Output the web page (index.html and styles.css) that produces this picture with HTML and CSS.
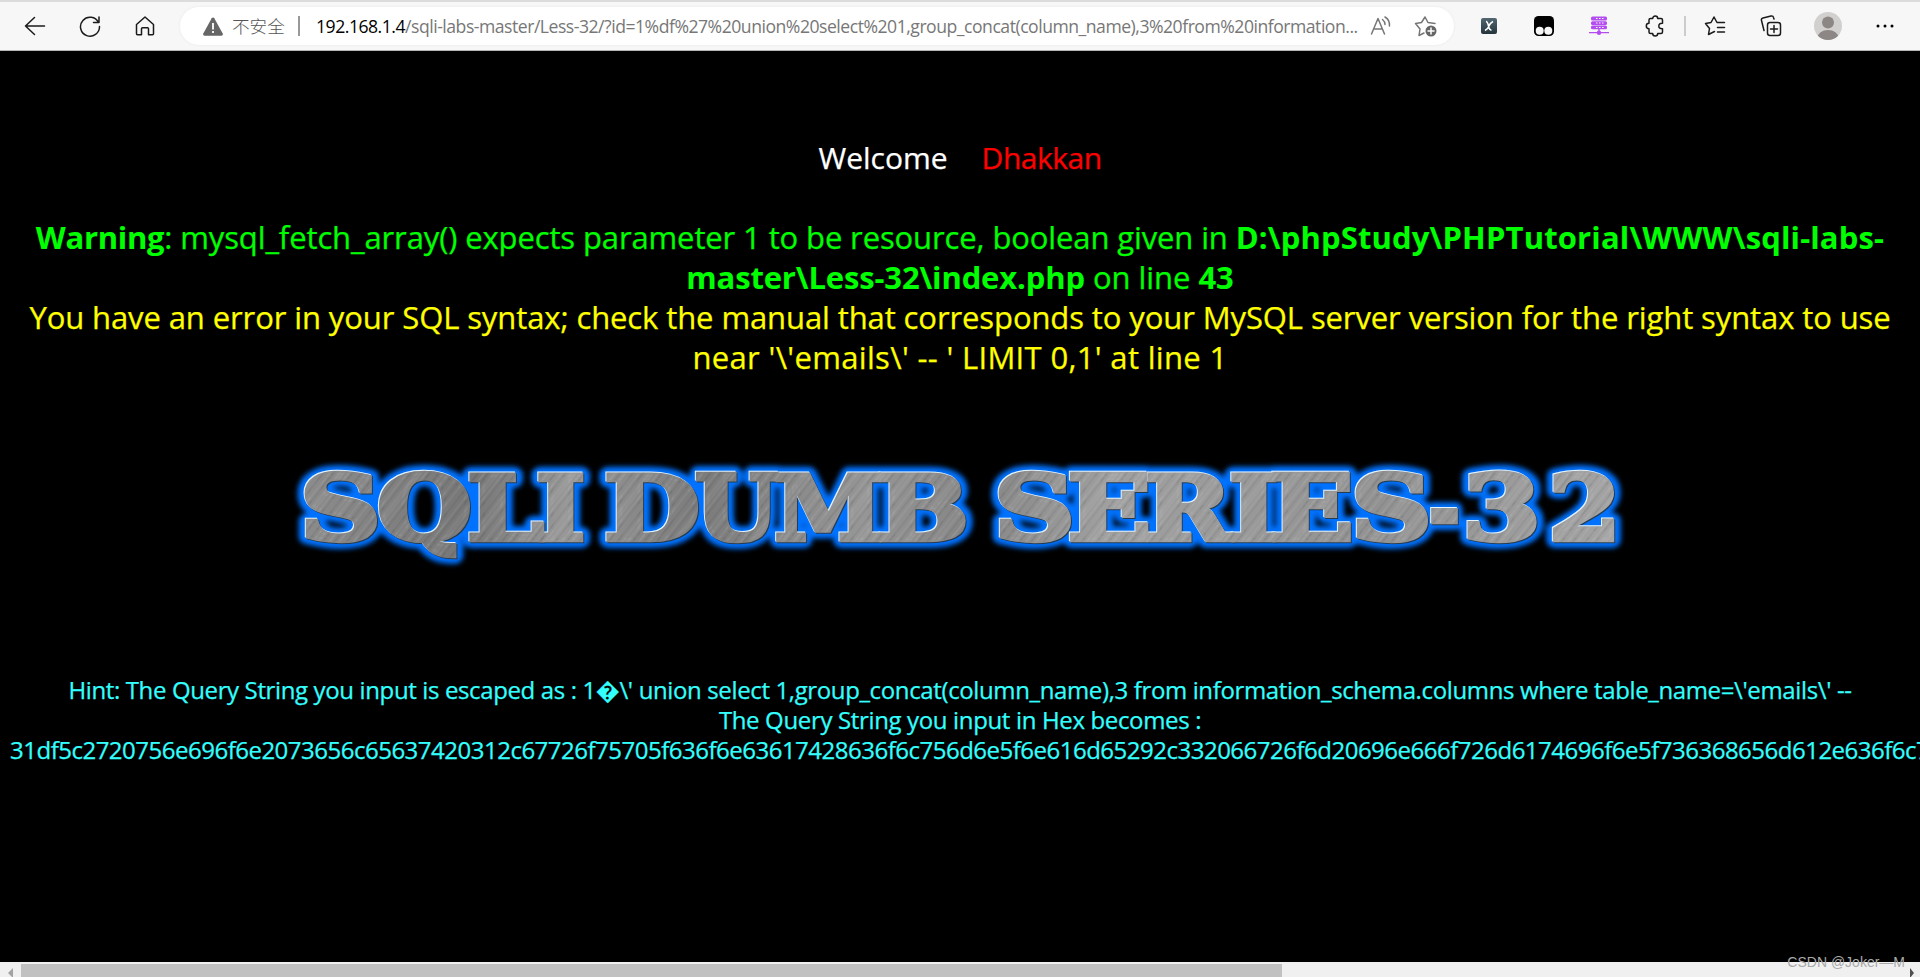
FILE: index.html
```html
<!DOCTYPE html>
<html lang="en">
<head>
<meta charset="utf-8">
<title>Less-32</title>
<link rel="stylesheet" href="styles.css">
</head>
<body>
<header class="toolbar">
  <svg class="icon back" width="24" height="24" viewBox="0 0 24 24"><path d="M21.500 12H2.500M11.500 3.500L2.500 12l9 8.500"/></svg>
  <svg class="icon reload" width="24" height="24" viewBox="0 0 24 24"><path d="M20.500 8.500A9.500 9.500 0 1 0 21.500 12.500M21 3v5.500h-5.500"/></svg>
  <svg class="icon home" width="24" height="24" viewBox="0 0 24 24"><path d="M3.500 10.500L12 3l8.500 7.500v9.300a1 1 0 0 1-1 1H15.500v-6a1 1 0 0 0-1-1h-5a1 1 0 0 0-1 1v6h-4a1 1 0 0 1-1-1z"/></svg>
  <div class="address">
    <svg class="warn" width="20" height="19" viewBox="0 0 20 19"><path d="M8.700 1.200a1.500 1.500 0 0 1 2.600 0l8.400 15.300a1.500 1.500 0 0 1-1.300 2.200H1.600A1.500 1.500 0 0 1 .3 16.500z" fill="#666"/><path d="M10 6v6.500M10 14v2" stroke="#fff" stroke-width="1.800"/></svg>
    <span class="insecure">不安全</span>
    <span class="divider"></span>
    <span class="url"><b>192.168.1.4</b>/sqli-labs-master/Less-32/?id=1%df%27%20union%20select%201,group_concat(column_name),3%20from%20information...</span>
    <svg class="icon gray read" width="22" height="22" viewBox="0 0 22 22"><path d="M1.500 19L8 3.500 14.500 19M3.700 14h8.600M12.500 4.500q2.500 2 2.500 5M15 2q5 3 4.500 9"/></svg>
    <svg class="icon gray fav" width="24" height="24" viewBox="0 0 24 24"><path d="M10 19l-5 2.500 1-6.500L1.500 9.500l6-1L11 3l3 5.500 7 1"/><circle cx="17" cy="17" r="5.500" fill="#666" stroke="none"/><path d="M14 17h6M17 14v6" stroke="#fff"/></svg>
  </div>
  <div class="tools">
    <svg width="16" height="16" viewBox="0 0 16 16"><defs><linearGradient id="ext" x2="0" y2="1"><stop stop-color="#536872"/><stop offset="1" stop-color="#24343d"/></linearGradient></defs><rect width="16" height="16" rx="2" fill="url(#ext)"/><path d="M5 3.500q1.500 0 2.500 4.500t3 4M12 3.500Q9 5 8 8t-4 4.500" fill="none" stroke="#fff" stroke-width="1.500"/></svg>
    <svg class="monkey" width="20" height="20" viewBox="0 0 20 20"><rect width="20" height="20" rx="4.500"/><circle cx="5.700" cy="14.800" r="4" fill="#f7f7f7"/><circle cx="14.300" cy="14.800" r="4" fill="#f7f7f7"/></svg>
    <svg class="proxy" width="20" height="20" viewBox="0 0 20 20" fill="#b44df0"><rect x="2" y="0.500" width="16" height="4" rx="1.500"/><rect x="2" y="5.300" width="16" height="3.600" rx="1.500"/><rect x="2" y="9.500" width="16" height="3.800" rx="1.500"/><path d="M9.300 13h1.400v3H20v1.300H0V16h9.300z"/><circle cx="10" cy="16.700" r="2.200"/><path d="M7 2.500h8M7 7h8M7 11.500h8" stroke="#fff" stroke-dasharray="1.500 1.500"/></svg>
    <svg class="icon puzzle" width="20" height="22" viewBox="0 0 20 22"><path d="M5.500 3.500h2.200a2.500 2.500 0 0 1 5 0H16q1.500 0 1.500 1.500v3.200q-3.700-.2-3.700 2.800t3.700 2.800V17q0 1.500-1.500 1.500h-3.300a2.500 2.500 0 0 1-5 0H5.500Q4 18.500 4 17v-3.300a2.700 2.700 0 0 1 0-5.400V5q0-1.500 1.500-1.500z"/></svg>
    <span class="sep"></span>
    <svg class="icon favorites" width="22" height="22" viewBox="0 0 22 22"><path d="M10.500 16.500L4.500 19.500l1-6L1.500 8.500l5.500-1L10 2l3 5.500h7.500M13.500 12.500H20.500M13.500 17H20.500"/></svg>
    <svg class="icon collections" width="22" height="22" viewBox="0 0 22 22"><rect x="7.500" y="7.500" width="13" height="13" rx="2.500"/><path d="M14 10.500v7M10.500 14h7M4 15.500L1.500 5.500Q1 3.500 3 3L11 1q2-.5 2.500 1.500l.5 1.500"/></svg>
    <svg class="avatar" width="28" height="28" viewBox="0 0 28 28"><defs><clipPath id="head"><circle cx="14" cy="14" r="14"/></clipPath></defs><g clip-path="url(#head)"><path d="M0 0h28v28H0z" fill="#d2d0ce"/><g fill="#8c8785"><circle cx="14" cy="10.500" r="6"/><ellipse cx="14" cy="26" rx="10.500" ry="8"/></g></g></svg>
    <svg class="more" width="18" height="4" viewBox="0 0 18 4"><circle cx="2" cy="2" r="1.500"/><circle cx="9" cy="2" r="1.500"/><circle cx="16" cy="2" r="1.500"/></svg>
  </div>
</header>
<main class="page">
  <h1 class="welcome"><span>Welcome</span><span class="name">Dhakkan</span></h1>
  <section class="message">
    <p class="line warning w1"><b>Warning</b>: mysql_fetch_array() expects parameter 1 to be resource, boolean given in <b class="path">D:\phpStudy\PHPTutorial\WWW\sqli-labs-</b></p>
    <p class="line warning w2"><b>master\Less-32\index.php</b> on line <b>43</b></p>
    <p class="line error e1">You have an error in your SQL syntax; check the manual that corresponds to your MySQL server version for the right syntax to use</p>
    <p class="line error e2">near '\'emails\' -- ' LIMIT 0,1' at line 1</p>
  </section>
  <svg class="banner" width="1360" height="130" viewBox="280 450 1360 130">
    <defs>
      <linearGradient id="metal" gradientUnits="userSpaceOnUse" x1="300" y1="470" x2="1620" y2="700">
        <stop stop-color="#8d8d8d"/><stop offset=".13" stop-color="#777"/><stop offset=".2" stop-color="#989898"/><stop offset=".3" stop-color="#7b7b7b"/><stop offset=".42" stop-color="#969696"/><stop offset=".5" stop-color="#858585"/><stop offset=".6" stop-color="#a0a0a0"/><stop offset=".8" stop-color="#929292"/><stop offset="1" stop-color="#a6a6a6"/>
      </linearGradient>
      <pattern id="brush" width="61" height="80" patternUnits="userSpaceOnUse" patternTransform="rotate(38)">
        <path d="M2 0v80M13 0v80M17 0v80M31 0v80M44 0v80M52 0v80" stroke="#fff" stroke-opacity=".1"/>
        <path d="M5 0v80M20 0v80M27 0v80M39 0v80M48 0v80M58 0v80" stroke="#000" stroke-opacity=".09"/>
        <path d="M10 0v80M35 0v80" stroke="#fff" stroke-opacity=".06" stroke-width="3"/>
      </pattern>
      <filter id="glow" x="-5%" y="-30%" width="110%" height="160%"><feGaussianBlur stdDeviation="2.500"/></filter>
      <g id="title" class="title">
        <text x="300" y="539.500" textLength="81" lengthAdjust="spacingAndGlyphs">S</text>
        <text x="377" y="539.500" textLength="95" lengthAdjust="spacingAndGlyphs">Q</text>
        <text x="467" y="539.500" textLength="77" lengthAdjust="spacingAndGlyphs">L</text>
        <text x="536" y="539.500" textLength="49.500" lengthAdjust="spacingAndGlyphs">I</text>
        <text x="604" y="539.500" textLength="96" lengthAdjust="spacingAndGlyphs">D</text>
        <text x="695" y="539.500" textLength="83.400" lengthAdjust="spacingAndGlyphs">U</text>
        <text x="774.500" y="539.500" textLength="109" lengthAdjust="spacingAndGlyphs">M</text>
        <text x="877" y="539.500" textLength="92" lengthAdjust="spacingAndGlyphs">B</text>
        <text x="994" y="539.500" textLength="81" lengthAdjust="spacingAndGlyphs">S</text>
        <text x="1067.600" y="539.500" textLength="83.700" lengthAdjust="spacingAndGlyphs">E</text>
        <text x="1145.300" y="539.500" textLength="86" lengthAdjust="spacingAndGlyphs">R</text>
        <text x="1229" y="539.500" textLength="49.500" lengthAdjust="spacingAndGlyphs">I</text>
        <text x="1270" y="539.500" textLength="83.700" lengthAdjust="spacingAndGlyphs">E</text>
        <text x="1351" y="539.500" textLength="81" lengthAdjust="spacingAndGlyphs">S</text>
        <text x="1429" y="539.500" textLength="31" lengthAdjust="spacingAndGlyphs">-</text>
        <text x="1462.400" y="539.500" textLength="78.500" lengthAdjust="spacingAndGlyphs">3</text>
        <text x="1548.400" y="539.500" textLength="72.500" lengthAdjust="spacingAndGlyphs">2</text>
      </g>
    </defs>
    <use href="#title" class="halo"/>
    <use href="#title" class="shade" x="1" y="1"/>
    <use href="#title" class="shine" x="-1" y="-1"/>
    <use href="#title" class="metal"/>
    <use href="#title" class="brush"/>
  </svg>
  <section class="hint">
    <p class="line h1">Hint: The Query String you input is escaped as : 1�\' union select 1,group_concat(column_name),3 from information_schema.columns where table_name=\'emails\' --</p>
    <p class="line h2">The Query String you input in Hex becomes :</p>
    <p class="line hex">31df5c2720756e696f6e2073656c65637420312c67726f75705f636f6e63617428636f6c756d6e5f6e616d65292c332066726f6d20696e666f726d6174696f6e5f736368656d612e636f6c7</p>
  </section>
</main>
<footer class="scrollbar">
  <span class="arrow left"></span><span class="thumb"></span><span class="arrow right"></span>
  <span class="credit">CSDN @Joker—M</span>
</footer>
</body>
</html>
```
FILE: styles.css
```css
* { box-sizing: border-box; }
body { margin: 0; height: 977px; overflow: hidden; display: flex; flex-direction: column; background: #000; font-family: "Open Sans", "Noto Sans", "Noto Sans CJK SC", sans-serif; }
.toolbar { height: 51px; flex: none; display: flex; align-items: center; padding: 0 0 0 23px; background: #f7f7f7; border-top: 2px solid #dcdcdc; border-bottom: 1px solid #b5b5b5; }
.icon { fill: none; stroke: #1b1b1b; stroke-width: 1.5; stroke-linecap: round; stroke-linejoin: round; }
.toolbar svg { flex: none; }
.icon.gray { stroke: #767676; }
.reload { margin-left: 31px; }
.home { margin-left: 31px; }
.address { margin-left: 23px; width: 1274px; height: 38px; border-radius: 19px; background: #fff; display: flex; align-items: center; padding-left: 23px; flex: none; box-shadow: 0 0 3px #e8e8e8; }
.insecure { margin-left: 9px; width: 54px; font: 300 17.600px/24px "Noto Sans CJK SC", sans-serif; color: #555; white-space: nowrap; }
.divider { width: 2px; height: 20px; background: #999; margin-left: 12px; }
.url { margin-left: 16px; width: 1042px; font-size: 17.6px; line-height: 24px; color: #777; white-space: nowrap; letter-spacing: -0.48px; }
.url b { color: #000; font-weight: 400; }
.read { margin-left: 12px; }
.fav { margin-left: 22px; }
.tools { flex: 1; display: flex; align-items: center; padding-left: 27px; }
.monkey { margin-left: 37px; }
.proxy { margin-left: 35px; }
.puzzle { margin-left: 36px; }
.sep { width: 2px; height: 20px; background: #ccc; margin-left: 19px; }
.favorites { margin-left: 18px; }
.collections { margin-left: 34px; }
.avatar { margin-left: 32px; }
.more { margin-left: 34px; }
.page { flex: 1; display: flex; flex-direction: column; align-items: center; color: #fff; }
.line { margin: 0; white-space: nowrap; }
.welcome { margin: 87px 0 0; font-size: 30px; line-height: 40px; font-weight: 400; display: flex; gap: 34px; }
.name { color: #f00; letter-spacing: -0.5px; }
.welcome, .error, .warning, .hint { -webkit-text-stroke: 0.25px currentColor; }
.warning b { -webkit-text-stroke: 0; }
.message { margin-top: 39px; display: flex; flex-direction: column; align-items: center; font-size: 31px; line-height: 40px; }
.warning { color: #0f0; }
.error { color: #ff0; }
.w1 { letter-spacing: -0.12px; }
.w1 b:first-child { letter-spacing: -0.3px; }
.path { letter-spacing: 0.14px; }
.w2 { letter-spacing: -0.05px; }
.w2 b:first-child { letter-spacing: -0.15px; }
.e1 { letter-spacing: -0.1px; }
.e2 { letter-spacing: 0.33px; }
.banner { margin-top: 73px; flex: none; }
.title { font: bold 90px "DejaVu Serif", serif; }
.halo { fill: #0072ff; stroke: #0072ff; stroke-width: 16px; stroke-linejoin: round; filter: url(#glow); }
.shade { fill: #263b50; stroke: #263b50; stroke-width: 4.5px; }
.shine { fill: #e4f4ff; stroke: #e4f4ff; stroke-width: 4.5px; }
.metal { fill: url(#metal); stroke: url(#metal); stroke-width: 4.5px; }
.brush { fill: url(#brush); stroke: url(#brush); stroke-width: 4.5px; }
.hint { margin-top: 95px; width: 1920px; display: flex; flex-direction: column; font-size: 24px; line-height: 30px; color: #3ff; }
.h1 { align-self: center; letter-spacing: -0.37px; }
.h2 { align-self: center; letter-spacing: -0.35px; }
.hex { padding-left: 10px; letter-spacing: -0.5px; }
.scrollbar { position: relative; height: 15px; flex: none; background: #f0f0f0; display: flex; align-items: center; padding: 2px 6px 0 8px; }
.arrow { border: 5px solid transparent; }
.left { border-left: 0; border-right-color: #a3a3a3; margin-top: 5px; }
.thumb { width: 1261px; height: 13px; background: #c1c1c1; margin-left: 8px; }
.right { border-right: 0; border-left: 4px solid #505050; margin: 5px 0 0 auto; }
.credit { position: absolute; right: 15px; top: -9px; font: 14px/18px "Liberation Sans", "Noto Sans CJK SC", sans-serif; color: #aaa; white-space: nowrap; }
```
